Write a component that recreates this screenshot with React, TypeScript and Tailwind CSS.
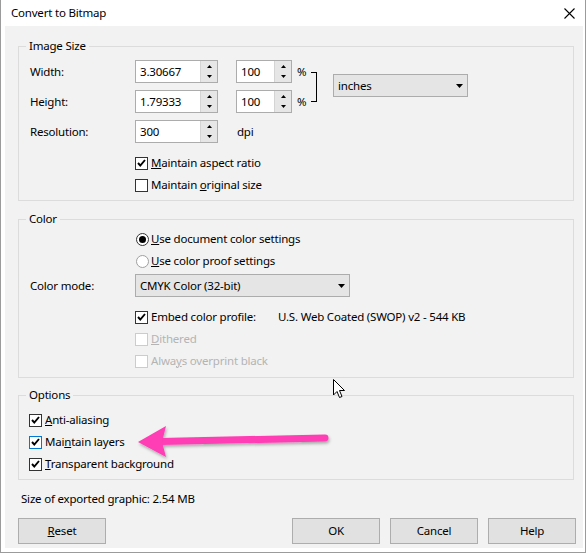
import type { ReactNode } from "react"

const font = "font-['Noto_Sans',sans-serif]"
const txt = "text-[11.5px] tracking-[-0.2px]"

function SpinBox({ value, className }: { value: string; className: string }) {
  return (
    <div className={`flex h-[23px] border border-[#acacac] bg-white ${className}`}>
      <div className={`flex flex-1 items-center pl-[4px] ${txt} text-black`}>{value}</div>
      <div className="flex w-[17px] flex-col items-center justify-between border-l border-[#d4d4d4] bg-[#e6e6e6] py-[4px]">
        <svg width="5" height="3" viewBox="0 0 5 3">
          <path d="M2.5 0 L5 3 L0 3 Z" fill="#000" />
        </svg>
        <svg width="5" height="3" viewBox="0 0 5 3">
          <path d="M0 0 L5 0 L2.5 3 Z" fill="#000" />
        </svg>
      </div>
    </div>
  )
}

function Select({ value, className }: { value: string; className: string }) {
  return (
    <div className={`flex h-[23px] items-center justify-between border border-[#acacac] bg-[#e5e5e5] pl-[4px] pr-[4px] ${txt} text-black ${className}`}>
      <span>{value}</span>
      <svg width="7" height="4" viewBox="0 0 7 4">
        <path d="M0 0 L7 0 L3.5 4 Z" fill="#000" />
      </svg>
    </div>
  )
}

function Checkbox({
  checked,
  disabled,
  focused,
  children,
}: {
  checked?: boolean
  disabled?: boolean
  focused?: boolean
  children: ReactNode
}) {
  const border = disabled ? "border-[#cccccc]" : focused ? "border-[#0078d7]" : "border-[#333333]"
  return (
    <div className="flex h-[22px] items-center">
      <div className={`flex h-[13px] w-[13px] items-center justify-center border bg-white ${border}`}>
        {checked && (
          <svg width="9" height="8" viewBox="0 0 9 8">
            <path d="M1 4 L3.3 6.5 L8 1" fill="none" stroke="#000" strokeWidth="1.9" />
          </svg>
        )}
      </div>
      <span className={`ml-[3px] ${txt} ${disabled ? "text-[#b4b4b4]" : "text-black"}`}>{children}</span>
    </div>
  )
}

function Radio({ checked, children }: { checked?: boolean; children: ReactNode }) {
  return (
    <div className="flex h-[22px] items-center pl-[1px]">
      <div
        className={`flex h-[13px] w-[13px] items-center justify-center rounded-full border bg-white ${
          checked ? "border-[#333333]" : "border-[#a0a0a0]"
        }`}
      >
        {checked && <div className="h-[7px] w-[7px] rounded-full bg-black" />}
      </div>
      <span className={`ml-[2px] ${txt} text-black`}>{children}</span>
    </div>
  )
}

function Button({ children }: { children: ReactNode }) {
  return (
    <div className={`flex h-[26px] w-[88px] items-center justify-center border border-[#adadad] bg-[#e1e1e1] ${txt} text-black`}>
      {children}
    </div>
  )
}

function Group({ title, className, children }: { title: string; className: string; children: ReactNode }) {
  return (
    <fieldset className={`w-[556px] border border-[#dcdcdc] p-0 ${className}`}>
      <legend className={`ml-[7px] px-[3px] ${txt} leading-[16px] text-black`}>{title}</legend>
      {children}
    </fieldset>
  )
}

export default function App() {
  return (
    <div className={`relative h-[555px] w-[588px] bg-white ${font} leading-[16px]`}>
      <div className="flex h-[553px] w-[586px] flex-col border-x border-b border-[#9b9b9b]">
        {/* title bar */}
        <div className="flex h-[26px] items-center justify-between pl-[10px] pr-[10px]">
          <span className={`${txt} text-black`}>Convert to Bitmap</span>
          <svg width="11" height="11" viewBox="0 0 11 11">
            <path d="M0.5 0.5 L10.5 10.5 M10.5 0.5 L0.5 10.5" stroke="#000" strokeWidth="1.1" />
          </svg>
        </div>

        {/* client */}
        <div className="ml-[4px] flex h-[522px] w-[578px] flex-col bg-[#f2f2f2] pl-[13px] pt-[12px]">
          <Group title="Image Size" className="">
            <div className="px-[11px] pb-[4px] pt-[6px]">
              <div className="flex">
                <div className="flex flex-col gap-[7px]">
                  <div className="flex h-[23px] items-center">
                    <span className={`w-[105px] ${txt}`}>Width:</span>
                    <SpinBox value="3.30667" className="w-[83px]" />
                    <SpinBox value="100" className="ml-[18px] w-[56px]" />
                    <span className={`ml-[5px] w-[14px] ${txt}`}>%</span>
                  </div>
                  <div className="flex h-[23px] items-center">
                    <span className={`w-[105px] ${txt}`}>Height:</span>
                    <SpinBox value="1.79333" className="w-[83px]" />
                    <SpinBox value="100" className="ml-[18px] w-[56px]" />
                    <span className={`ml-[5px] w-[14px] ${txt}`}>%</span>
                  </div>
                </div>
                <div className="mt-[12px] h-[30px] w-[6px] border-y border-r border-black" />
                <Select value="inches" className="ml-[16px] mt-[14px] w-[135px]" />
              </div>
              <div className="mt-[7px] flex h-[23px] items-center">
                <span className={`w-[105px] ${txt}`}>Resolution:</span>
                <SpinBox value="300" className="w-[83px]" />
                <span className={`ml-[19px] ${txt}`}>dpi</span>
              </div>
              <div className="ml-[105px] mt-[9px]">
                <Checkbox checked>
                  <u>M</u>aintain aspect ratio
                </Checkbox>
                <Checkbox>
                  Maintain <u>o</u>riginal size
                </Checkbox>
              </div>
            </div>
          </Group>

          <Group title="Color" className="mt-[10px]">
            <div className="px-[11px] pb-[5px] pt-[1px]">
              <div className="ml-[105px]">
                <Radio checked>
                  <u>U</u>se document color settings
                </Radio>
                <Radio>
                  <u>U</u>se color proof settings
                </Radio>
              </div>
              <div className="mt-[2px] flex h-[23px] items-center">
                <span className={`w-[105px] ${txt}`}>Color mode:</span>
                <Select value="CMYK Color (32-bit)" className="w-[215px]" />
              </div>
              <div className="ml-[105px] mt-[9px]">
                <div className="flex items-center">
                  <div className="w-[143px]">
                    <Checkbox checked>Embed color profile:</Checkbox>
                  </div>
                  <span className={`${txt} text-black`}>U.S. Web Coated (SWOP) v2 - 544 KB</span>
                </div>
                <Checkbox disabled>
                  <u>D</u>ithered
                </Checkbox>
                <Checkbox disabled>
                  Alwa<u>y</u>s overprint black
                </Checkbox>
              </div>
            </div>
          </Group>

          <Group title="Options" className="mt-[9px]">
            <div className="pb-[4px] pl-[10px] pt-[6px]">
              <Checkbox checked>
                <u>A</u>nti-aliasing
              </Checkbox>
              <Checkbox checked focused>
                Mai<u>n</u>tain layers
              </Checkbox>
              <Checkbox checked>
                <u>T</u>ransparent background
              </Checkbox>
            </div>
          </Group>

          <div className={`ml-[3px] mt-[11px] ${txt} text-black`}>Size of exported graphic: 2.54 MB</div>

          <div className="mt-[11px] flex w-[558px] items-center">
            <Button>
              <u>R</u>eset
            </Button>
            <div className="flex-1" />
            <div className="flex gap-[10px]">
              <Button>OK</Button>
              <Button>Cancel</Button>
              <Button>Help</Button>
            </div>
          </div>
        </div>
      </div>

      {/* annotation arrow and mouse pointer over the dialog */}
      <svg className="pointer-events-none absolute left-0 top-0" width="588" height="555" viewBox="0 0 588 555">
        <defs>
          <filter id="sh" x="-10%" y="-50%" width="120%" height="200%">
            <feDropShadow dx="1" dy="2" stdDeviation="1.5" floodColor="#000" floodOpacity="0.3" />
          </filter>
        </defs>
        <g filter="url(#sh)">
          <line x1="160" y1="441.5" x2="325" y2="438" stroke="#ff3cb4" strokeWidth="7" strokeLinecap="round" />
          <path d="M138 442 L166 426 L162 442 L166 457 Z" fill="#ff3cb4" />
        </g>
        <path
          d="M333.5 379.5 L333.5 395 L337 391.5 L339.5 397.5 L342 396.5 L339.5 390.5 L344.5 390.5 Z"
          fill="#fff"
          stroke="#000"
          strokeWidth="1"
          strokeLinejoin="miter"
        />
      </svg>
    </div>
  )
}
